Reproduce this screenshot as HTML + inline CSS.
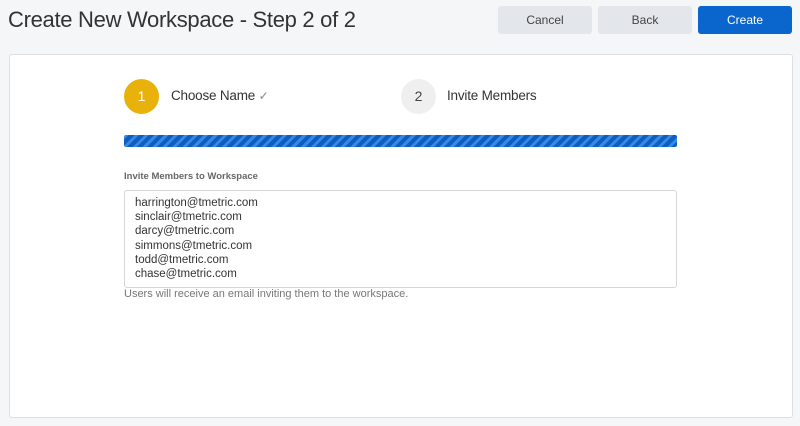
<!DOCTYPE html>
<html><head><style>
body{margin:0;width:800px;height:426px;background:#f5f6f8;font-family:"Liberation Sans",sans-serif;position:relative;overflow:hidden}
.t{position:absolute;left:8px;top:4px;font-size:22px;color:#333;line-height:32px;letter-spacing:-0.3px}
.b{position:absolute;top:6px;height:28px;line-height:28px;text-align:center;font-size:12px;border-radius:3px;color:#444;background:#e3e6ea}
.card{position:absolute;left:9px;top:54px;width:782px;height:362px;background:#fff;border:1px solid #dcdfe3;border-radius:3px}
.c{position:absolute;width:35px;height:35px;border-radius:50%;text-align:center;line-height:35px;font-size:14px}
.l{position:absolute;font-size:13.5px;color:#333;line-height:20px;letter-spacing:-0.2px}
.bar{position:absolute;left:124px;top:135px;width:553px;height:12px;border-radius:2px;background:repeating-linear-gradient(-45deg,#0a5fc4 0 4px,#3b86e0 4px 7px)}
.ta{position:absolute;left:124px;top:190px;width:551px;height:96px;border:1px solid #d3d6da;border-radius:3px}
.ta div{position:absolute;left:10px;top:5px;font-size:11.5px;line-height:14.2px;color:#333}
</style></head><body>
<div class="t">Create New Workspace - Step 2 of 2</div>
<div class="b" style="left:498px;width:94px">Cancel</div>
<div class="b" style="left:598px;width:94px">Back</div>
<div class="b" style="left:698px;width:94px;background:#0a66cc;color:#fff">Create</div>
<div class="card"></div>
<div class="c" style="left:124px;top:79px;background:#e9b20b;color:#fff">1</div>
<div class="l" style="left:171px;top:86px">Choose Name <span style="color:#888;font-size:12px">✓</span></div>
<div class="c" style="left:401px;top:79px;background:#efefef;color:#444">2</div>
<div class="l" style="left:447px;top:86px">Invite Members</div>
<div class="bar"></div>
<div style="position:absolute;left:124px;top:171px;font-size:9.5px;font-weight:bold;color:#666">Invite Members to Workspace</div>
<div class="ta"><div>harrington@tmetric.com<br>sinclair@tmetric.com<br>darcy@tmetric.com<br>simmons@tmetric.com<br>todd@tmetric.com<br>chase@tmetric.com</div></div>
<div style="position:absolute;left:124px;top:288px;font-size:11px;color:#777">Users will receive an email inviting them to the workspace.</div>
</body></html>
